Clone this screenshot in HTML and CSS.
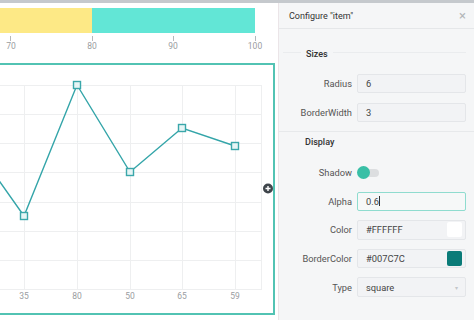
FILE: index.html
```html
<!DOCTYPE html>
<html lang="en">
<head>
    <meta charset="UTF-8">
    <meta name="viewport" content="width=device-width, initial-scale=1.0">
    <title>Configure item</title>
    <link rel="stylesheet" href="styles.css">
</head>
<body>
    <div id="editor">
        <main class="canvas">
            <div class="range-bar">
                <div class="range-low"></div>
                <div class="range-high"></div>
            </div>
            <svg class="range-axis" width="279" height="30" viewBox="0 33 279 30">
                <g stroke="#b5b8bb" stroke-width="1">
                    <line x1="10.5" y1="36" x2="10.5" y2="41"/>
                    <line x1="92.5" y1="36" x2="92.5" y2="41"/>
                    <line x1="173.5" y1="36" x2="173.5" y2="41"/>
                    <line x1="255.5" y1="36" x2="255.5" y2="41"/>
                </g>
                <g class="axis-text" text-anchor="middle">
                    <text x="11" y="49">70</text>
                    <text x="92" y="49">80</text>
                    <text x="173" y="49">90</text>
                    <text x="255" y="49">100</text>
                </g>
            </svg>
            <div class="chart-box">
                <svg width="273" height="248" viewBox="0 65 273 248">
                    <g stroke="#eeeff0" stroke-width="1">
                        <line x1="0" y1="85.5" x2="262" y2="85.5"/>
                        <line x1="0" y1="114.5" x2="262" y2="114.5"/>
                        <line x1="0" y1="143.5" x2="262" y2="143.5"/>
                        <line x1="0" y1="172.5" x2="262" y2="172.5"/>
                        <line x1="0" y1="202.5" x2="262" y2="202.5"/>
                        <line x1="0" y1="231.5" x2="262" y2="231.5"/>
                        <line x1="0" y1="260.5" x2="262" y2="260.5"/>
                        <line x1="0" y1="289.5" x2="262" y2="289.5"/>
                        <line x1="24.5" y1="85" x2="24.5" y2="290"/>
                        <line x1="77.5" y1="85" x2="77.5" y2="290"/>
                        <line x1="130.5" y1="85" x2="130.5" y2="290"/>
                        <line x1="182.5" y1="85" x2="182.5" y2="290"/>
                        <line x1="235.5" y1="85" x2="235.5" y2="290"/>
                        <line x1="261.5" y1="85" x2="261.5" y2="290"/>
                    </g>
                    <polyline points="-29,141 24,216 77,85 130,172 182,128 235,146" fill="none" stroke="#34a5a9" stroke-width="1.4"/>
                    <g fill="#e6f5f5" stroke="#3aa7aa" stroke-width="1.4">
                        <rect x="20.5" y="212.5" width="7" height="7"/>
                        <rect x="73.5" y="81.5" width="7" height="7"/>
                        <rect x="126.5" y="168.5" width="7" height="7"/>
                        <rect x="178.5" y="124.5" width="7" height="7"/>
                        <rect x="231.5" y="142.5" width="7" height="7"/>
                    </g>
                    <g class="axis-text" text-anchor="middle">
                        <text x="24" y="299">35</text>
                        <text x="77" y="299">80</text>
                        <text x="130" y="299">50</text>
                        <text x="182" y="299">65</text>
                        <text x="235" y="299">59</text>
                    </g>
                    <circle cx="268" cy="188.5" r="5" fill="#3f454b"/>
                    <path d="M265.5 188.5h5M268 186v5" stroke="#fff" stroke-width="1.4"/>
                </svg>
            </div>
        </main>

        <aside class="panel">
            <div class="panel-header">
                <span>Configure "item"</span>
                <span class="close">&times;</span>
            </div>

            <section class="group group-first">
                <h2 class="group-title legend">Sizes</h2>
                <div class="rows">
                    <div class="row">
                        <label>Radius</label>
                        <div class="field">6</div>
                    </div>
                    <div class="row">
                        <label>BorderWidth</label>
                        <div class="field">3</div>
                    </div>
                </div>
            </section>

            <section class="group">
                <h2 class="group-title">Display</h2>
                <div class="rows rows-tight">
                    <div class="row">
                        <label>Shadow</label>
                        <div class="toggle"><span class="knob"></span></div>
                    </div>
                    <div class="row">
                        <label>Alpha</label>
                        <div class="field focused">0.6<span class="caret"></span></div>
                    </div>
                    <div class="row">
                        <label>Color</label>
                        <div class="field">#FFFFFF<span class="swatch swatch-white"></span></div>
                    </div>
                    <div class="row">
                        <label>BorderColor</label>
                        <div class="field">#007C7C<span class="swatch swatch-teal"></span></div>
                    </div>
                    <div class="row">
                        <label>Type</label>
                        <div class="field">square<span class="arrow">&#9662;</span></div>
                    </div>
                </div>
            </section>
        </aside>
    </div>
</body>
</html>
```

FILE: styles.css
```css
body {
    margin: 0;
    padding: 0;
    font-family: Roboto, "Liberation Sans", sans-serif;
    background-color: #ffffff;
    color: #333;
    overflow: hidden;
}

#editor {
    display: flex;
    width: 474px;
    height: 320px;
    border-top: 3px solid #c5c9cd;
    box-sizing: border-box;
}

.canvas {
    width: 278px;
    flex-shrink: 0;
    background-color: #ffffff;
}

.range-bar {
    display: flex;
    height: 25px;
    margin-top: 5px;
}

.range-low {
    width: 92px;
    background-color: #fde986;
}

.range-high {
    width: 163px;
    background-color: #62e6d6;
}

.range-axis {
    display: block;
}

.axis-text {
    font-family: Roboto, "Liberation Sans", sans-serif;
    font-size: 8.5px;
    fill: #9a9da1;
}

.chart-box {
    width: 273px;
    height: 248px;
    border: 2px solid #52c3b3;
    border-left: none;
}

.chart-box svg {
    display: block;
}

/* right side panel */
.panel {
    flex: 1;
    background-color: #f5f6f7;
    border-left: 1px solid #ebe5e8;
    height: 317px;
    box-sizing: border-box;
}

.panel-header {
    display: flex;
    justify-content: space-between;
    align-items: center;
    height: 25px;
    padding: 0 8px 0 10px;
    border-bottom: 1px solid #e5e7e9;
    font-size: 9px;
    color: #333;
}

.close {
    font-size: 13px;
    color: #b3b6b9;
}

.group {
    padding: 3px 8px 9px 0;
    border-top: 1px solid #e7e9eb;
}

.group-first {
    border-top: none;
    padding-top: 18px;
}

.group-title {
    margin: 0 0 14px 26px;
    height: 14px;
    line-height: 14px;
    font-size: 9px;
    font-weight: 500;
    color: #333;
}

.legend {
    display: flex;
    align-items: center;
    margin-left: 4px;
    margin-bottom: 13px;
}

.legend::before,
.legend::after {
    content: "";
    height: 1px;
    background-color: #eaecee;
    margin-top: -4px;
}

.legend::before {
    width: 18px;
    margin-right: 5px;
}

.legend::after {
    flex: 1;
    margin-left: 5px;
}

.rows {
    display: flex;
    flex-direction: column;
    gap: 10px;
}

.rows-tight {
    gap: 9px;
}

.row {
    display: flex;
    align-items: center;
    height: 19px;
}

.rows-tight .row {
    height: 19.6px;
}

.row label {
    width: 78px;
    text-align: right;
    padding-right: 5px;
    font-size: 9.3px;
    color: #555;
    box-sizing: border-box;
}

.field {
    position: relative;
    flex: 1;
    height: 100%;
    display: flex;
    align-items: center;
    padding-left: 8px;
    font-size: 9.3px;
    color: #444;
    background-color: #f2f3f5;
    border: 1px solid #e4e6e9;
    border-radius: 2px;
    box-sizing: border-box;
}

.field.focused {
    background-color: #f6f8f8;
    border-color: #8fdccf;
}

.caret {
    display: inline-block;
    width: 1px;
    height: 10px;
    background-color: #333;
}

.swatch {
    position: absolute;
    right: 3px;
    top: 1px;
    width: 15px;
    height: 15px;
    border-radius: 2px;
}

.swatch-white {
    background-color: #ffffff;
}

.swatch-teal {
    background-color: #0a7b78;
}

.arrow {
    position: absolute;
    right: 7px;
    font-size: 6px;
    color: #c3c6c9;
}

.toggle {
    position: relative;
    width: 21px;
    height: 8px;
    margin-left: 1px;
    background-color: #dcdee0;
    border-radius: 4px;
}

.knob {
    position: absolute;
    left: -1px;
    top: -2.5px;
    width: 13px;
    height: 13px;
    border-radius: 50%;
    background-color: #39bfa6;
}
```
